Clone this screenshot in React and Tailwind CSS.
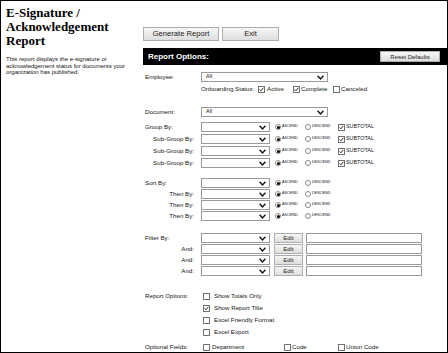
import React from "react";

function Chevron() {
    return (
        <svg width="7" height="5" viewBox="0 0 7 5" className="shrink-0">
            <path d="M0.6 0.8 L3.5 3.9 L6.4 0.8" stroke="#111" strokeWidth="1.4" fill="none" />
        </svg>
    );
}

function Select({ w, value }) {
    return (
        <div className={`h-[10px] border border-[#9a9a9a] bg-white flex items-center justify-between pl-[4px] pr-[3px] shrink-0 ${w}`}>
            <span className="text-[5.5px] leading-none text-[#111]">{value}</span>
            <Chevron />
        </div>
    );
}

function Checkbox({ checked }) {
    return (
        <span className="w-[7px] h-[7px] border border-[#707070] bg-white flex items-center justify-center shrink-0">
            {checked && (
                <svg width="5" height="5" viewBox="0 0 5 5">
                    <path d="M0.6 2.4 L1.9 3.8 L4.4 0.8" stroke="#111" strokeWidth="0.9" fill="none" />
                </svg>
            )}
        </span>
    );
}

function Radio({ on }) {
    return (
        <span className="w-[6px] h-[6px] rounded-full border border-[#8a8a8a] bg-white flex items-center justify-center shrink-0">
            {on && <span className="w-[3px] h-[3px] rounded-full bg-black" />}
        </span>
    );
}

function RowLabel({ sub, children }) {
    return sub ? (
        <div className="w-[58px] shrink-0 text-right pr-[7px]">{children}</div>
    ) : (
        <div className="w-[58px] shrink-0 pl-[2px]">{children}</div>
    );
}

function SortControls({ subtotal }) {
    return (
        <>
            <span className="ml-[5px]"><Radio on /></span>
            <span className="ml-[1px] w-[23px] text-[3.8px] leading-none">ASCEND</span>
            <Radio />
            <span className="ml-[1px] w-[26px] text-[3.8px] leading-none">DESCEND</span>
            {subtotal && (
                <>
                    <Checkbox checked />
                    <span className="ml-[1px] text-[5.4px] leading-none">SUBTOTAL</span>
                </>
            )}
        </>
    );
}

function Button({ className, children }) {
    return (
        <div className={`flex items-center justify-center border border-[#adadad] bg-gradient-to-b from-[#f6f6f6] to-[#dedede] text-[#1a1a1a] ${className}`}>
            {children}
        </div>
    );
}

export default function App() {
    const groups = ["Group By:", "Sub-Group By:", "Sub-Group By:", "Sub-Group By:"];
    const sorts = ["Sort By:", "Then By:", "Then By:", "Then By:"];
    const filters = ["Filter By:", "And:", "And:", "And:"];
    const options = [
        ["Show Totals Only", false],
        ["Show Report Title", true],
        ["Excel Friendly Format", false],
        ["Excel Export", false],
    ];

    return (
        <div className="w-[448px] h-[353px] border border-black bg-white overflow-hidden flex font-['Liberation_Sans',Arial,sans-serif] text-[#141414]">
            <div className="w-[142px] shrink-0 pl-[5px] pt-[5px]">
                <h1 className="font-['Liberation_Serif','Times_New_Roman',serif] font-bold text-[13px] leading-[14px] text-black">
                    E-Signature /<br />
                    Acknowledgement<br />
                    Report
                </h1>
                <p className="mt-[8px] w-[132px] text-[6px] leading-[6.7px]">
                    This report displays the e-signature or acknowledgement status for documents your organization has published.
                </p>
            </div>

            <div className="flex-1 pt-[26px] text-[6.2px] leading-none">
                <div className="flex gap-[3px]">
                    <Button className="w-[76px] h-[14px] text-[7.6px]">Generate Report</Button>
                    <Button className="w-[57px] h-[14px] text-[7.6px]">Exit</Button>
                </div>

                <div className="mt-[7px] h-[17px] bg-black flex items-center justify-between pl-[5px] pr-[7px]">
                    <span className="text-white font-bold text-[8px]">Report Options:</span>
                    <Button className="w-[60px] h-[11px] text-[6px]">Reset Defaults</Button>
                </div>

                <div className="mt-[7px] flex items-center h-[10px]">
                    <RowLabel>Employee:</RowLabel>
                    <Select w="w-[127px]" value="All" />
                </div>
                <div className="mt-[2px] flex items-center h-[10px] pl-[58px]">
                    <span className="w-[57px]">Onboarding Status:</span>
                    <Checkbox checked />
                    <span className="ml-[2px] w-[26px]">Active</span>
                    <Checkbox checked />
                    <span className="ml-[1px] w-[32px]">Complete</span>
                    <Checkbox />
                    <span className="ml-[1px]">Canceled</span>
                </div>

                <div className="mt-[13px] flex items-center h-[10px]">
                    <RowLabel>Document:</RowLabel>
                    <Select w="w-[127px]" value="All" />
                </div>

                <div className="mt-[5px] flex flex-col gap-[2px]">
                    {groups.map((g, i) => (
                        <div key={i} className="flex items-center h-[10px]">
                            <RowLabel sub={i > 0}>{g}</RowLabel>
                            <Select w="w-[69px]" />
                            <SortControls subtotal />
                        </div>
                    ))}
                </div>

                <div className="mt-[10px] flex flex-col gap-[1px]">
                    {sorts.map((s, i) => (
                        <div key={i} className="flex items-center h-[10px]">
                            <RowLabel sub={i > 0}>{s}</RowLabel>
                            <Select w="w-[69px]" />
                            <SortControls />
                        </div>
                    ))}
                </div>

                <div className="mt-[12px] flex flex-col gap-[1px]">
                    {filters.map((f, i) => (
                        <div key={i} className="flex items-center h-[10px]">
                            <RowLabel sub={i > 0}>{f}</RowLabel>
                            <Select w="w-[69px]" />
                            <Button className="ml-[4px] w-[29px] h-[10px] text-[6px]">Edit</Button>
                            <div className="ml-[3px] w-[116px] h-[10px] border border-[#9a9a9a] bg-white" />
                        </div>
                    ))}
                </div>

                <div className="mt-[15px] flex">
                    <RowLabel>
                        <div className="h-[10px] flex items-center">Report Options:</div>
                    </RowLabel>
                    <div className="flex flex-col gap-[2px] pl-[2px]">
                        {options.map(([label, checked]) => (
                            <div key={label} className="flex items-center h-[10px]">
                                <Checkbox checked={checked} />
                                <span className="ml-[4px]">{label}</span>
                            </div>
                        ))}
                    </div>
                </div>

                <div className="mt-[5px] flex items-center h-[10px]">
                    <RowLabel>Optional Fields:</RowLabel>
                    <div className="w-[83px] pl-[2px] flex items-center">
                        <Checkbox />
                        <span className="ml-[2px]">Department</span>
                    </div>
                    <div className="w-[54px] flex items-center">
                        <Checkbox />
                        <span className="ml-[1px]">Code</span>
                    </div>
                    <div className="flex items-center">
                        <Checkbox />
                        <span className="ml-[1px]">Union Code</span>
                    </div>
                </div>
            </div>
        </div>
    );
}
